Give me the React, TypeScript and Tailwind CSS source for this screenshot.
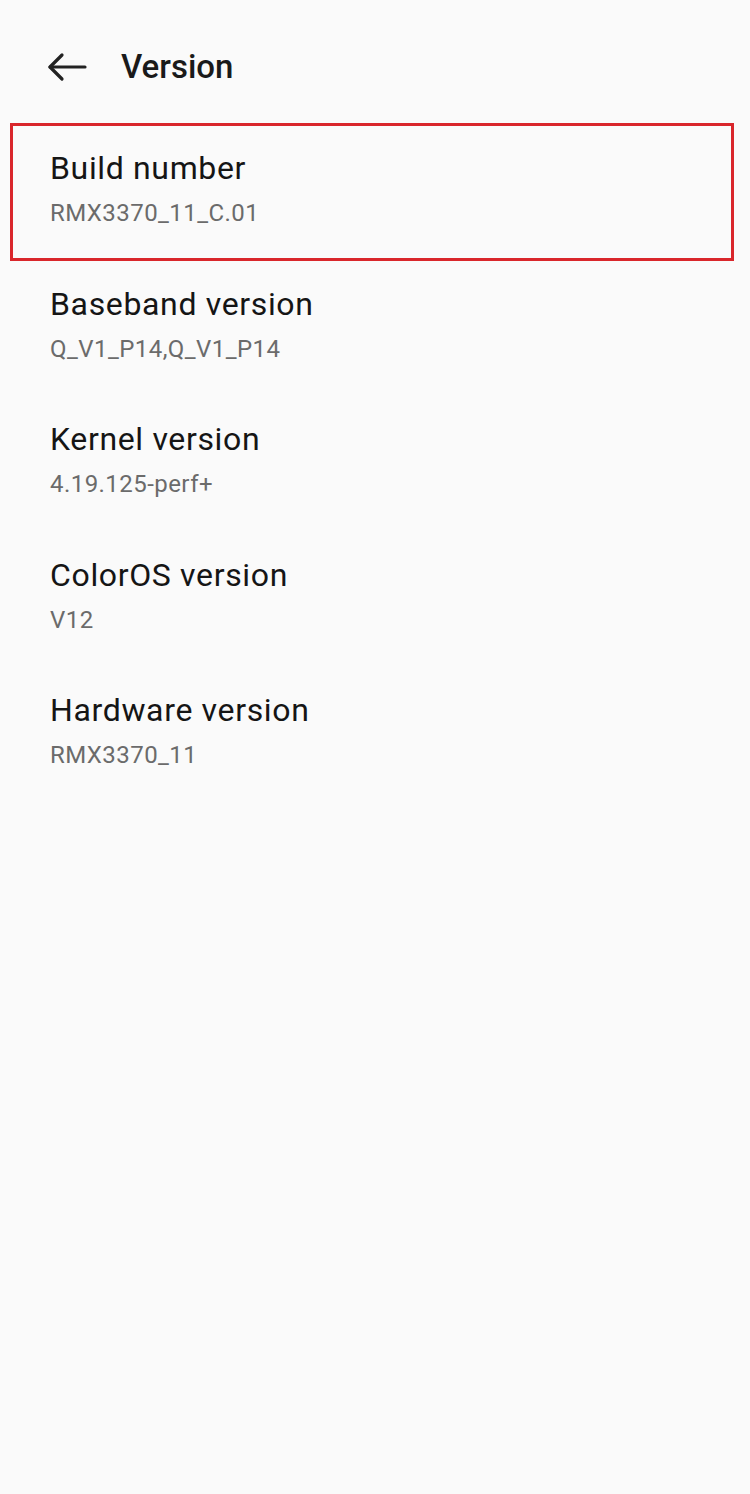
const rows = [
  { title: 'Build number', value: 'RMX3370_11_C.01', highlighted: true },
  { title: 'Baseband version', value: 'Q_V1_P14,Q_V1_P14' },
  { title: 'Kernel version', value: '4.19.125-perf+' },
  { title: 'ColorOS version', value: 'V12' },
  { title: 'Hardware version', value: 'RMX3370_11' },
];

export default function App() {
  return (
    <div className="min-h-[1494px] w-[750px] bg-[#fafafa] font-['Roboto',sans-serif]">
      {/* Header */}
      <div className="flex h-[123px] items-start pt-[46px]">
        <button className="ml-[46px] flex h-[42px] w-[42px] items-center justify-center">
          <svg width="40" height="30" viewBox="0 0 40 30" fill="none" stroke="#222" strokeWidth="3.2" strokeLinecap="round" strokeLinejoin="round">
            <path d="M38 15H3" />
            <path d="M15 3L3 15l12 12" />
          </svg>
        </button>
        <h1 className="ml-[33px] text-[33px] leading-[42px] font-medium text-[#1a1a1a]">Version</h1>
      </div>

      {/* Rows */}
      <div>
        {rows.map((row) => (
          <div key={row.title} className="relative h-[135.5px] pl-[50px] pt-[27px]">
            {row.highlighted && (
              <div className="pointer-events-none absolute left-[10px] top-0 h-[138px] w-[724px] border-[3px] border-[#d9262b]" />
            )}
            <div className="text-[32px] leading-[36px] tracking-[0.65px] text-[#151515]">{row.title}</div>
            <div className="mt-[12px] text-[24px] leading-[30px] tracking-[0.45px] text-[#6b6b6b]">{row.value}</div>
          </div>
        ))}
      </div>
    </div>
  );
}
